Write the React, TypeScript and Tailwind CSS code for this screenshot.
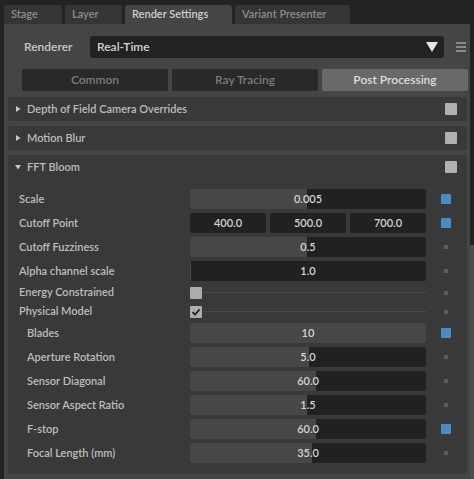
import { ReactNode } from 'react';

const FONT = { fontFamily: 'Lato, "Noto Sans", sans-serif' };

interface SliderRow {
  label: string;
  value: string;
  pct: number;
  nested?: boolean;
  keyed?: boolean;
}

const topRows: SliderRow[] = [
  { label: 'Scale', value: '0.005', pct: 49.6, keyed: true },
];

const nestedRows: SliderRow[] = [
  { label: 'Blades', value: '10', pct: 100, nested: true, keyed: true },
  { label: 'Aperture Rotation', value: '5.0', pct: 50.5, nested: true },
  { label: 'Sensor Diagonal', value: '60.0', pct: 53.5, nested: true },
  { label: 'Sensor Aspect Ratio', value: '1.5', pct: 49.6, nested: true },
  { label: 'F-stop', value: '60.0', pct: 53.5, nested: true, keyed: true },
  { label: 'Focal Length (mm)', value: '35.0', pct: 51.7, nested: true },
];

function KeyMark({ keyed }: { keyed?: boolean }) {
  return (
    <div className="w-[40px] flex justify-center">
      {keyed ? (
        <div className="w-[10px] h-[10px] rounded-[1px] bg-[#4a8cc4]" />
      ) : (
        <div className="w-[4px] h-[4px] bg-[#5c5c5c]" />
      )}
    </div>
  );
}

function Row({ label, nested, children, keyed, h = 'h-[24px]' }: { label: string; nested?: boolean; children: ReactNode; keyed?: boolean; h?: string }) {
  return (
    <div className={`flex items-center ${h}`}>
      <div className={`w-[182px] shrink-0 text-[11px] font-semibold text-[#bdbdbd] ${nested ? 'pl-[19px]' : 'pl-[11px]'}`}>{label}</div>
      <div className="w-[236px] shrink-0">{children}</div>
      <KeyMark keyed={keyed} />
    </div>
  );
}

function Slider({ value, pct }: { value: string; pct: number }) {
  return (
    <div className="relative h-[20px] bg-[#212121] rounded-[2px] overflow-hidden">
      <div className="absolute left-0 top-0 bottom-0 bg-[#474747]" style={{ width: `${pct}%` }} />
      <div className="relative h-full flex items-center justify-center text-[11px] font-semibold text-[#d4d4d4]">{value}</div>
    </div>
  );
}

function CheckRow({ label, checked }: { label: string; checked?: boolean }) {
  return (
    <Row label={label} h="h-[19px]">
      <div className="flex items-center gap-[1px]">
        <div className="w-[12px] h-[12px] bg-[#adadad] rounded-[1px] flex items-center justify-center">
          {checked && (
            <svg width="10" height="10" viewBox="0 0 10 10">
              <path d="M1.5 5.2 L4 7.6 L8.6 2.4" fill="none" stroke="#1c1c1c" strokeWidth="1.6" />
            </svg>
          )}
        </div>
        <div className="flex-1 h-[1px] bg-[#4a4a4a]" />
      </div>
    </Row>
  );
}

function SectionHeader({ title, open }: { title: string; open?: boolean }) {
  return (
    <div className="flex items-center h-[24px] pl-[7px] pr-[10px]">
      <svg width="6" height="6" viewBox="0 0 6 6" className="mr-[6px]">
        {open ? <path d="M0 1 L6 1 L3 5.5 Z" fill="#c8c8c8" /> : <path d="M1 0 L5.5 3 L1 6 Z" fill="#c8c8c8" />}
      </svg>
      <span className="flex-1 text-[11px] font-semibold text-[#bcbcbc]">{title}</span>
      <div className="w-[12px] h-[12px] bg-[#b0b0b0] rounded-[1px]" />
    </div>
  );
}

const tabs = ['Stage', 'Layer', 'Render Settings', 'Variant Presenter'];
const tabW = ['w-[58px]', 'w-[57px]', 'w-[107px]', 'w-[115px]'];

export default function App() {
  return (
    <div className="w-[474px] h-[479px] bg-[#232323] overflow-hidden flex flex-col" style={FONT}>
      {/* tab strip */}
      <div className="h-[24px] pt-[5px] pl-[4px] flex gap-[3px] shrink-0">
        {tabs.map((t, i) => (
          <div
            key={t}
            className={`${tabW[i]} rounded-t-[3px] flex items-center pl-[7px] text-[11px] font-semibold ${
              t === 'Render Settings' ? 'bg-[#454545] text-[#cfcfcf]' : 'bg-[#353535] text-[#8c8c8c]'
            }`}
          >
            {t}
          </div>
        ))}
      </div>

      <div className="flex flex-1">
        <div className="ml-[4px] w-[466px] bg-[#454545] flex flex-col">
          {/* renderer */}
          <div className="flex items-center h-[22px] mt-[12px] pl-[20px]">
            <span className="w-[66px] text-[12px] font-semibold text-[#c8c8c8]">Renderer</span>
            <div className="w-[354px] h-[22px] bg-[#222222] rounded-[3px] flex items-center pl-[7px] pr-[6px]">
              <span className="flex-1 text-[12px] font-semibold text-[#d2d2d2]">Real-Time</span>
              <svg width="12" height="10" viewBox="0 0 12 10">
                <path d="M0 0 L12 0 L6 10 Z" fill="#e6e6e6" />
              </svg>
            </div>
            <svg width="10" height="10" viewBox="0 0 10 10" className="ml-[12px]">
              <rect x="0" y="0" width="10" height="2" fill="#8a8a8a" />
              <rect x="0" y="4" width="10" height="2" fill="#8a8a8a" />
              <rect x="0" y="8" width="10" height="2" fill="#8a8a8a" />
            </svg>
          </div>

          {/* mode buttons */}
          <div className="flex gap-[4px] pl-[18px] mt-[11px]">
            {['Common', 'Ray Tracing', 'Post Processing'].map((b) => (
              <div
                key={b}
                className={`w-[146px] h-[22px] rounded-[2px] flex items-center justify-center text-[12px] font-semibold ${
                  b === 'Post Processing' ? 'bg-[#696969] text-[#dcdcdc]' : 'bg-[#292929] text-[#7c7c7c]'
                }`}
              >
                {b}
              </div>
            ))}
          </div>

          {/* sections */}
          <div className="flex flex-col gap-[5px] mt-[6px] ml-[4px] w-[459px] flex-1">
            <div className="bg-[#393939] rounded-[2px]">
              <SectionHeader title="Depth of Field Camera Overrides" />
            </div>
            <div className="bg-[#393939] rounded-[2px]">
              <SectionHeader title="Motion Blur" />
            </div>
            <div className="bg-[#393939] rounded-[2px] flex-1">
              <SectionHeader title="FFT Bloom" open />
              <div className="pt-[8px] flex flex-col">
                {topRows.map((r) => (
                  <Row key={r.label} label={r.label} keyed={r.keyed}>
                    <Slider value={r.value} pct={r.pct} />
                  </Row>
                ))}
                <Row label="Cutoff Point" keyed>
                  <div className="flex gap-[4px]">
                    {['400.0', '500.0', '700.0'].map((v) => (
                      <div key={v} className="flex-1 h-[20px] bg-[#212121] rounded-[2px] flex items-center justify-center text-[11px] font-semibold text-[#d4d4d4]">
                        {v}
                      </div>
                    ))}
                  </div>
                </Row>
                <Row label="Cutoff Fuzziness">
                  <Slider value="0.5" pct={49.6} />
                </Row>
                <Row label="Alpha channel scale">
                  <Slider value="1.0" pct={0.6} />
                </Row>
                <CheckRow label="Energy Constrained" />
                <CheckRow label="Physical Model" checked />
                {nestedRows.map((r) => (
                  <Row key={r.label} label={r.label} nested keyed={r.keyed}>
                    <Slider value={r.value} pct={r.pct} />
                  </Row>
                ))}
              </div>
            </div>
          </div>
          <div className="h-[5px]" />
        </div>
        {/* scrollbar */}
        <div className="w-[4px] flex flex-col">
          <div className="h-[221px]" />
          <div className="flex-1 bg-[#4e4e4e] rounded-l-[1px]" />
        </div>
      </div>
    </div>
  );
}
